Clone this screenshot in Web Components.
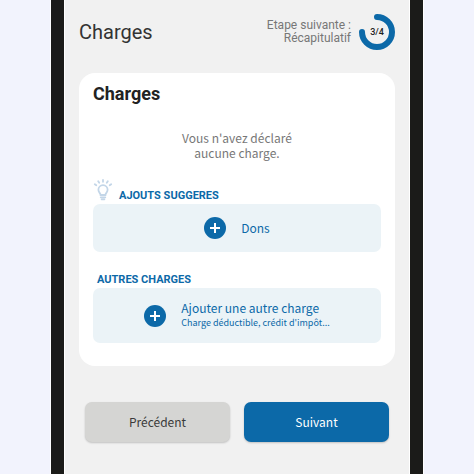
<!DOCTYPE html>
<html lang="fr">
<head>
<meta charset="utf-8">
<meta name="viewport" content="width=device-width, initial-scale=1">
<title>Charges</title>
<style>
  body {
    margin: 0;
    background: #f2f3fd;
    font-family: "Noto Sans CJK JP", "Noto Sans", sans-serif;
    --heading: Roboto, sans-serif;
    --blue: #0c69a8;
    --ink: #333;
    --muted: #777;
    --tile: #ebf3f7;
  }
</style>
</head>
<body>
<phone-frame>
  <step-header slot="header" heading="Charges" step="3" total="4" next="Récapitulatif"></step-header>
  <content-card heading="Charges">
    <p slot="message">Vous n'avez déclaré<br>aucune charge.</p>
    <charge-section heading="AJOUTS SUGGERES" icon>
      <add-tile size="short">Dons</add-tile>
    </charge-section>
    <charge-section heading="AUTRES CHARGES">
      <add-tile>Ajouter une autre charge<span slot="detail">Charge déductible, crédit d'impôt...</span></add-tile>
    </charge-section>
  </content-card>
  <nav-buttons slot="footer"></nav-buttons>
</phone-frame>

<script>
class BaseElement extends HTMLElement {
  connectedCallback() {
    if (this.shadowRoot) return;
    this.attachShadow({ mode: "open" }).innerHTML = this.render();
  }
}

customElements.define("phone-frame", class extends BaseElement {
  render() {
    return `
    <style>
      :host { display: block; padding: 0 51px; }
      .screen {
        box-sizing: border-box; min-height: 100vh; padding: 0 15px 29px;
        background: #f1f1f1; border: solid #1b1b19; border-width: 0 13px;
        box-shadow: inset 1px 0 #fff, inset -1px 0 #fff, 1px 0 #fff, -1px 0 #fff;
      }
    </style>
    <div class="screen">
      <slot name="header"></slot>
      <main><slot></slot></main>
      <slot name="footer"></slot>
    </div>`;
  }
});

customElements.define("step-header", class extends BaseElement {
  render() {
    const step = this.getAttribute("step"), total = this.getAttribute("total");
    const share = step / total * 100;
    return `
    <style>
      :host { display: block; font-family: var(--heading); }
      header { display: flex; align-items: center; height: 64px; padding-bottom: 9px; }
      h1 { flex: 1; margin: 0; font-size: 20px; line-height: 24px; font-weight: 400; color: var(--ink); }
      p { margin: 0 8px 0 0; text-align: right; font-size: 12px; line-height: 13px; color: var(--muted); }
      .ring { display: grid; place-items: center; width: 36px; height: 36px; }
      .ring > * { grid-area: 1 / 1; }
      .ring span { font-size: 9px; line-height: 12px; font-weight: 500; color: #222; }
    </style>
    <header>
      <h1>${this.getAttribute("heading")}</h1>
      <p>Etape suivante :<br>${this.getAttribute("next")}</p>
      <div class="ring">
        <svg width="36" height="36" viewBox="0 0 36 36" fill="none" aria-hidden="true">
          <circle cx="18" cy="18" r="15" stroke="#0c69a8" stroke-width="6" stroke-linecap="round"
            pathLength="100" stroke-dasharray="${share} 100" transform="rotate(-90 18 18)"/>
        </svg>
        <span>${step}/${total}</span>
      </div>
    </header>`;
  }
});

customElements.define("content-card", class extends BaseElement {
  render() {
    return `
    <style>
      :host { display: block; padding: 9px 14px 23px; border-radius: 16px; background: #fff; }
      h2 { margin: 0; font: 700 18px/24px var(--heading); color: #222; }
      ::slotted(p) { margin: 24px 0 18px; text-align: center; font-size: 12px; line-height: 15px; color: var(--muted); }
    </style>
    <h2>${this.getAttribute("heading")}</h2>
    <slot name="message"></slot>
    <slot></slot>`;
  }
});

customElements.define("charge-section", class extends BaseElement {
  render() {
    const bulb = this.hasAttribute("icon") ? `
      <svg width="20" height="24" viewBox="0 0 20 24" fill="none" stroke="#c3d6e8" stroke-width="1.8" stroke-linecap="round" aria-hidden="true">
        <path d="M7.6 17c0-1.900-2.200-2.600-2.200-5.200a4.600 4.600 0 0 1 9.200 0c0 2.600-2.200 3.300-2.200 5.200z"/>
        <path d="M7.700 19.300h4.600M8.600 21.300h2.800M10 2v1.800M5.200 3.200l1 1.500M14.800 3.200l-1 1.500M1.800 6.200l1.500 1.100M18.200 6.200l-1.500 1.100"/>
      </svg>` : "";
    return `
    <style>
      :host { display: block; }
      h3 {
        display: flex; align-items: flex-end; gap: 6px; min-height: 26px; margin: 0; padding-left: 4px;
        font: 700 11px/16px var(--heading); color: var(--blue);
      }
      :host([icon]) h3 { padding-left: 0; }
      :host(:not([icon])) h3 { min-height: 36px; }
      svg { flex: none; margin-bottom: 2px; }
    </style>
    <section><h3>${bulb}${this.getAttribute("heading")}</h3><slot></slot></section>`;
  }
});

customElements.define("add-tile", class extends BaseElement {
  render() {
    return `
    <style>
      :host { display: block; }
      button {
        display: flex; align-items: center; justify-content: center; gap: 15px;
        box-sizing: border-box; width: 100%; min-height: 55px; padding: 0; border: 0; border-radius: 7px;
        background: var(--tile); color: var(--blue); font-family: inherit; text-align: left; cursor: pointer;
      }
      :host([size="short"]) button { min-height: 48px; }
      svg { flex: none; }
      .text { padding-bottom: 2px; }
      .label { display: block; font-size: 12px; line-height: 17px; }
      ::slotted(span) { display: block; font-size: 9px; line-height: 14px; }
    </style>
    <button type="button">
      <svg width="22" height="22" viewBox="0 0 22 22" aria-hidden="true">
        <circle cx="11" cy="11" r="11" fill="#0c69a8"/>
        <path d="M11 6v10M6 11h10" stroke="#fff" stroke-width="2"/>
      </svg>
      <span class="text"><span class="label"><slot></slot></span><slot name="detail"></slot></span>
    </button>`;
  }
});

customElements.define("nav-buttons", class extends BaseElement {
  render() {
    return `
    <style>
      :host { display: block; padding: 36px 6px 0; }
      nav { display: grid; grid-template-columns: 1fr 1fr; gap: 14px; }
      button {
        height: 40px; padding: 0; border: 0; border-radius: 7px; cursor: pointer;
        font-family: inherit; font-size: 12px; line-height: 16px;
        background: #d5d5d3; color: #3a3a3a; box-shadow: 0 1px 2px #0003;
      }
      .next { background: var(--blue); color: #fff; }
    </style>
    <nav aria-label="Étapes">
      <button type="button">Précédent</button>
      <button type="button" class="next">Suivant</button>
    </nav>`;
  }
});
</script>
</body>
</html>
